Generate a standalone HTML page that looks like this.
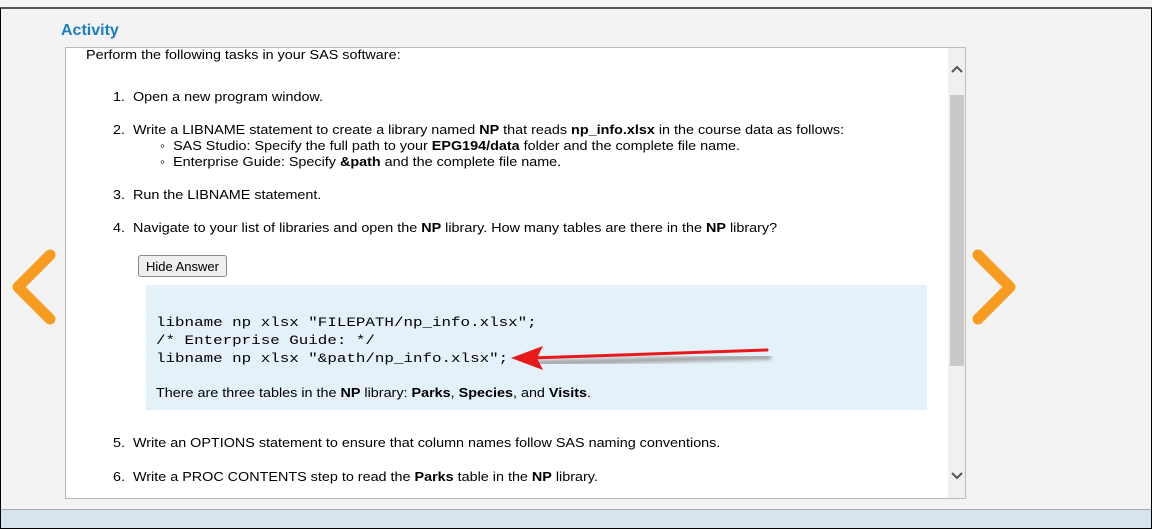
<!DOCTYPE html>
<html><head><style>
body{margin:0;width:1152px;height:528px;position:relative;background:#f3f3f3;font-family:"Liberation Sans",Arial,sans-serif;font-size:13px;color:#000;overflow:hidden}
.frame{position:absolute;left:0;top:7px;width:1150px;height:519px;border:1px solid #000;border-top:2px solid #555}
.bottom{position:absolute;left:1px;top:509px;width:1150px;height:18px;background:#d8e4ec;border-top:1px solid #aaa}
h1{position:absolute;left:61px;top:22px;margin:0;font-size:16px;color:#1a7fc1;font-weight:bold}
.box{position:absolute;left:65px;top:47px;width:899px;height:450px;border:1px solid #bbb;background:#fff;overflow:hidden}
.sb{position:absolute;right:0;top:0;width:17px;height:100%;background:#f0f0f0}
.thumb{position:absolute;left:2px;top:47px;width:14px;height:271px;background:#c8c8c8}
.t{position:absolute;white-space:nowrap;line-height:15px;transform:scaleX(1.105);transform-origin:0 0}
.ans{position:absolute;left:80px;top:237px;width:781px;height:125px;background:#e5f1f8}
pre{margin:0;font-family:"Liberation Mono",monospace;font-size:13px;line-height:18px;position:absolute;left:10px;top:29px;transform:scaleX(1.22);transform-origin:0 0}
button{position:absolute;left:72px;top:207px;width:89px;height:22px;font-family:"Liberation Sans",sans-serif;font-size:13px;background:#efefef;border:1px solid #888;border-radius:3px;padding:0}
</style></head><body>
<div class="frame"></div>
<div class="bottom"></div>
<h1>Activity</h1>
<svg style="position:absolute;left:0;top:0" width="1152" height="528"><g fill="none" stroke="#f89b21" stroke-width="11" stroke-linecap="round" stroke-linejoin="round"><path d="M50 255L18 287L50 319"/><path d="M978 255L1010 287L978 319"/></g></svg>
<div class="box">
<div class="t" style="left:20px;top:-1px">Perform the following tasks in your SAS software:</div>
<div class="t" style="left:47px;top:41px">1.&nbsp; Open a new program window.</div>
<div class="t" style="left:47px;top:74px">2.&nbsp; Write a LIBNAME statement to create a library named <b>NP</b> that reads <b>np_info.xlsx</b> in the course data as follows:</div>
<div class="t" style="left:94px;top:90px">◦&nbsp; SAS Studio: Specify the full path to your <b>EPG194/data</b> folder and the complete file name.</div>
<div class="t" style="left:94px;top:106px">◦&nbsp; Enterprise Guide: Specify <b>&amp;path</b> and the complete file name.</div>
<div class="t" style="left:47px;top:139px">3.&nbsp; Run the LIBNAME statement.</div>
<div class="t" style="left:47px;top:172px">4.&nbsp; Navigate to your list of libraries and open the <b>NP</b> library. How many tables are there in the <b>NP</b> library?</div>
<button>Hide Answer</button>
<div class="ans"><pre>libname np xlsx "FILEPATH/np_info.xlsx";
/* Enterprise Guide: */
libname np xlsx "&amp;path/np_info.xlsx";</pre>
<div class="t" style="left:10px;top:100px">There are three tables in the <b>NP</b> library: <b>Parks</b>, <b>Species</b>, and <b>Visits</b>.</div></div>
<div class="t" style="left:47px;top:387px">5.&nbsp; Write an OPTIONS statement to ensure that column names follow SAS naming conventions.</div>
<div class="t" style="left:47px;top:421px">6.&nbsp; Write a PROC CONTENTS step to read the <b>Parks</b> table in the <b>NP</b> library.</div>
<svg style="position:absolute;left:0;top:0" width="899" height="450"><defs><filter id="s"><feGaussianBlur stdDeviation="2"/></filter></defs><g transform="translate(-65,-47)"><path d="M768 352L535 358" stroke="#888" stroke-width="4" filter="url(#s)" transform="translate(2,4)"/><path d="M766 349L530 357" stroke="#e8191b" stroke-width="3" stroke-linecap="round"/><path d="M510 357L542 345L536 357L542 369Z" fill="#e8191b"/></g></svg>
<div class="sb"><div class="thumb"></div>
<svg style="position:absolute;left:3px;top:17px" width="12" height="8"><path d="M1 7L6 2L11 7" fill="none" stroke="#555" stroke-width="2"/></svg>
<svg style="position:absolute;left:3px;top:424px" width="12" height="8"><path d="M1 1L6 6L11 1" fill="none" stroke="#555" stroke-width="2"/></svg></div>
</div>
</body></html>
